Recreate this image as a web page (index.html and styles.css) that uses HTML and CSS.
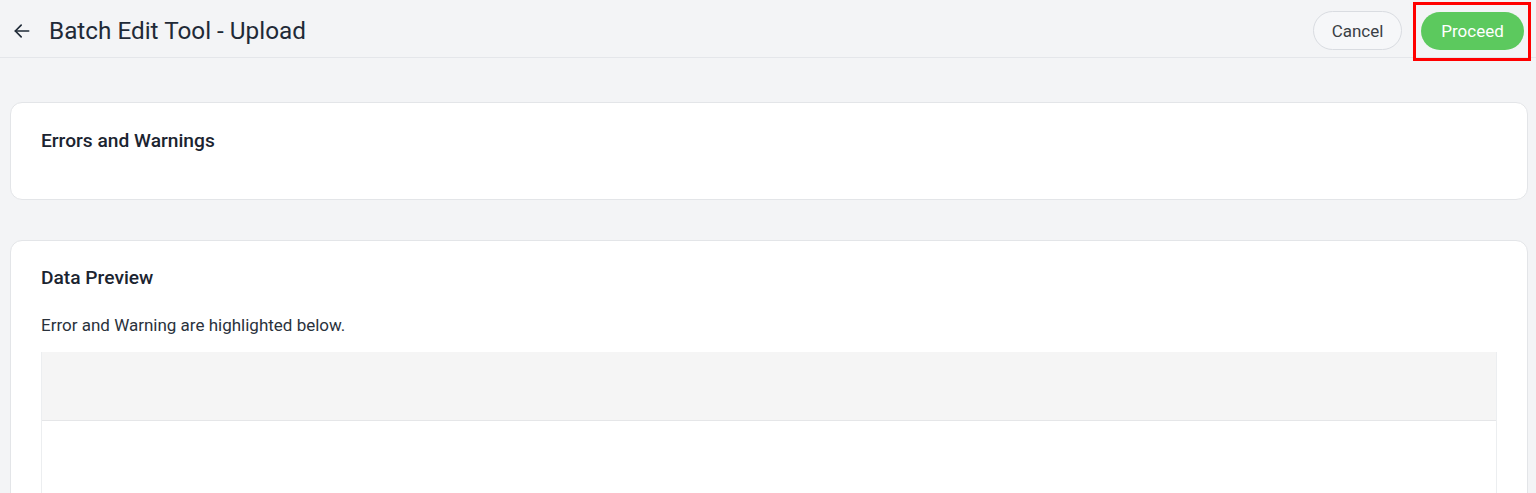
FILE: index.html
```html
<!DOCTYPE html>
<html>
<head>
<meta charset="utf-8">
<link rel="stylesheet" href="styles.css">
</head>
<body>
<header class="topbar">
  <div class="title-group">
    <button class="back" aria-label="Back">
      <svg width="20" height="20" viewBox="0 0 24 24" fill="none" stroke="#1f2a37" stroke-width="2" stroke-linecap="round" stroke-linejoin="round"><path d="M20 12H4"/><path d="M11 5l-7 7 7 7"/></svg>
    </button>
    <h1 class="title">Batch Edit Tool - Upload</h1>
  </div>
  <div class="actions">
    <button class="btn btn-cancel">Cancel</button>
    <div class="highlight">
      <button class="btn btn-proceed">Proceed</button>
    </div>
  </div>
</header>
<main class="content">
  <section class="card card-errors">
    <h2 class="card-title">Errors and Warnings</h2>
  </section>
  <section class="card card-preview">
    <h2 class="card-title">Data Preview</h2>
    <p class="note">Error and Warning are highlighted below.</p>
    <div class="table">
      <div class="table-head"></div>
      <div class="table-body"></div>
    </div>
  </section>
</main>
</body>
</html>
```
FILE: styles.css
```css
* { box-sizing: border-box; }
html, body { margin: 0; padding: 0; }
body {
  background: #f3f4f6;
  font-family: Roboto, "Liberation Sans", Arial, sans-serif;
  color: #1f2a37;
  height: 493px;
  overflow: hidden;
}
.topbar {
  height: 58px;
  border-bottom: 1px solid #e4e6ea;
  display: flex;
  align-items: center;
  justify-content: space-between;
  padding: 4px 5px 0 12px;
}
.title-group { display: flex; align-items: center; }
.back {
  border: 0; background: none; padding: 0; margin: 0;
  width: 20px; height: 20px; display: flex;
}
.title {
  margin: 0 0 0 17px;
  font-size: 24.3px;
  line-height: 28px;
  font-weight: 400;
  color: #1f2a37;
}
.actions { display: flex; align-items: center; gap: 11px; }
.btn {
  font-family: Roboto, "Liberation Sans", Arial, sans-serif;
  font-size: 17px;
  height: 39px;
  border-radius: 20px;
  padding: 0;
  cursor: pointer;
}
.btn-cancel {
  background: #f6f7f9;
  border: 1px solid #d9dce1;
  color: #3a3f45;
  width: 89px;
}
.highlight {
  border: 3px solid #f00;
  padding: 7px 4px 8px 5px;
  margin-top: 2px;
}
.btn-proceed {
  background: #5cc95e;
  border: 0;
  color: #fff;
  width: 103px;
  height: 38px;
  display: block;
}
.content {
  padding: 44px 8px 0 10px;
  display: flex;
  flex-direction: column;
  gap: 40px;
}
.card {
  background: #fff;
  border: 1px solid #e3e5e8;
  border-radius: 12px;
  padding: 26px 30px 0 30px;
}
.card-errors { height: 98px; }
.card-title {
  margin: 0;
  font-size: 19.2px;
  font-weight: 500;
  color: #1b2430;
  line-height: 24px;
}
.card-preview { height: 300px; padding-top: 25px; }
.note {
  margin: 25px 0 0 0;
  font-size: 17px;
  line-height: 20px;
  color: #2a323c;
}
.table {
  margin-top: 17px;
  border: 1px solid #eceef0;
  border-top: 0;
}
.table-head {
  height: 69px;
  background: #f5f5f5;
  border-bottom: 1px solid #e5e6e8;
}
.table-body { height: 120px; background: #fff; }
```
